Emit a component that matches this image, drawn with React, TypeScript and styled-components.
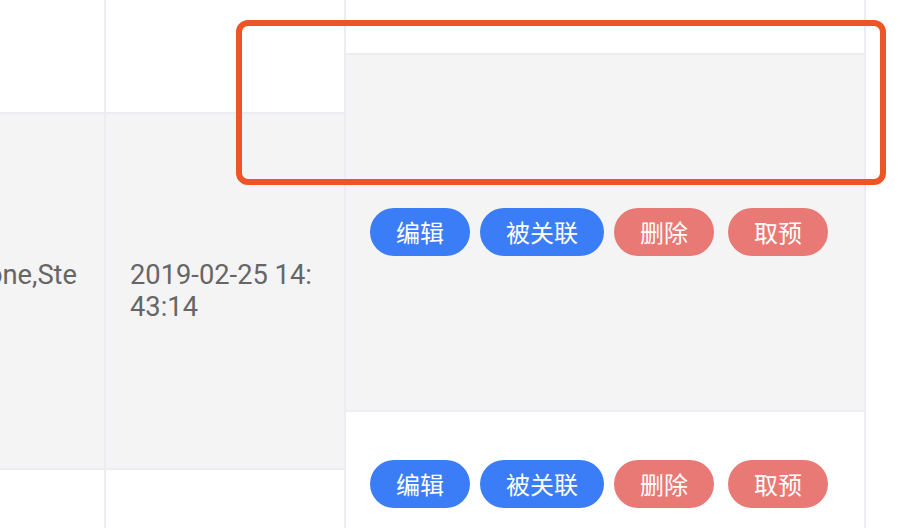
import React from "react";
import styled, { createGlobalStyle } from "styled-components";

const GlobalStyle = createGlobalStyle`
  html, body {
    margin: 0;
    padding: 0;
    background: #ffffff;
    overflow: hidden;
  }
  body {
    font-family: Roboto, "Noto Sans CJK SC", sans-serif;
  }
`;

const LINE = "#ececf1";

type Action = { label: string; kind: "primary" | "danger" };

const actions: Action[] = [
  { label: "编辑", kind: "primary" },
  { label: "被关联", kind: "primary" },
  { label: "删除", kind: "danger" },
  { label: "取预", kind: "danger" },
];

const ActionButtons = () => (
  <ButtonGroup>
    {actions.map((a, i) => (
      <PillButton key={a.label} $kind={a.kind} $last={i === actions.length - 1}>
        {a.label}
      </PillButton>
    ))}
  </ButtonGroup>
);

const App = () => {
  return (
    <>
      <GlobalStyle />
      <Page>
        <MainTable>
          <Row $height={112} $striped={false}>
            <NameCell />
            <TimeCell />
          </Row>
          <Row $height={354} $striped>
            <NameCell>
              <CellText>
                iPhone,Ste
                <br />
                ve
              </CellText>
            </NameCell>
            <TimeCell>
              <CellText>
                2019-02-25 14:
                <br />
                43:14
              </CellText>
            </TimeCell>
          </Row>
          <Row $height={160} $striped={false}>
            <NameCell />
            <TimeCell />
          </Row>
        </MainTable>

        <FixedColumn>
          <ActionRow $height={53} $striped={false} />
          <ActionRow $height={355} $striped $lift={2}>
            <ActionButtons />
          </ActionRow>
          <ActionRow $height={146} $striped={false} $lift={2}>
            <ActionButtons />
          </ActionRow>
        </FixedColumn>

        <Highlight />
      </Page>
    </>
  );
};

export default App;

const Page = styled.div`
  position: relative;
  width: 900px;
  height: 528px;
  overflow: hidden;
  display: flex;
  align-items: flex-start;
  background: #ffffff;
`;

const MainTable = styled.div`
  display: flex;
  flex-direction: column;
  margin-left: -76px;
  flex-shrink: 0;
`;

const Row = styled.div<{ $height: number; $striped: boolean }>`
  display: flex;
  height: ${(p) => p.$height}px;
  background: ${(p) => (p.$striped ? "#f4f4f5" : "#ffffff")};
  border-bottom: 2px solid ${LINE};
`;

const Cell = styled.div`
  box-sizing: border-box;
  display: flex;
  align-items: center;
  padding: 0 24px;
  border-right: 2px solid ${LINE};
  overflow: hidden;
`;

const NameCell = styled(Cell)`
  width: 182px;
`;

const TimeCell = styled(Cell)`
  width: 240px;
`;

const CellText = styled.div`
  font-size: 27.3px;
  line-height: 32px;
  color: #666666;
  white-space: nowrap;
`;

const FixedColumn = styled.div`
  display: flex;
  flex-direction: column;
  width: 520px;
  flex-shrink: 0;
  border-right: 2px solid ${LINE};
  box-sizing: border-box;
  height: 528px;
`;

const ActionRow = styled.div<{ $height: number; $striped: boolean; $lift?: number }>`
  display: flex;
  align-items: center;
  box-sizing: content-box;
  padding: 0 24px ${(p) => p.$lift ?? 0}px;
  height: ${(p) => p.$height - (p.$lift ?? 0)}px;
  flex-shrink: 0;
  background: ${(p) => (p.$striped ? "#f4f4f5" : "#ffffff")};
  border-bottom: 2px solid ${LINE};
`;

const ButtonGroup = styled.div`
  display: flex;
  align-items: center;
`;

const PillButton = styled.button<{ $kind: "primary" | "danger"; $last: boolean }>`
  height: 48px;
  padding: 0 26px;
  margin-left: ${(p) => (p.$last ? 14 : 10)}px;
  &:first-child {
    margin-left: 0;
  }
  border: none;
  border-radius: 24px;
  background: ${(p) => (p.$kind === "primary" ? "#3b7df6" : "#e97975")};
  color: #ffffff;
  font-family: "Noto Sans CJK SC", Roboto, sans-serif;
  font-size: 24px;
  line-height: 48px;
  white-space: nowrap;
  cursor: pointer;
`;

const Highlight = styled.div`
  position: absolute;
  left: 236px;
  top: 20px;
  width: 650px;
  height: 165px;
  box-sizing: border-box;
  border: 6px solid #ef5427;
  border-radius: 12px;
  pointer-events: none;
`;
